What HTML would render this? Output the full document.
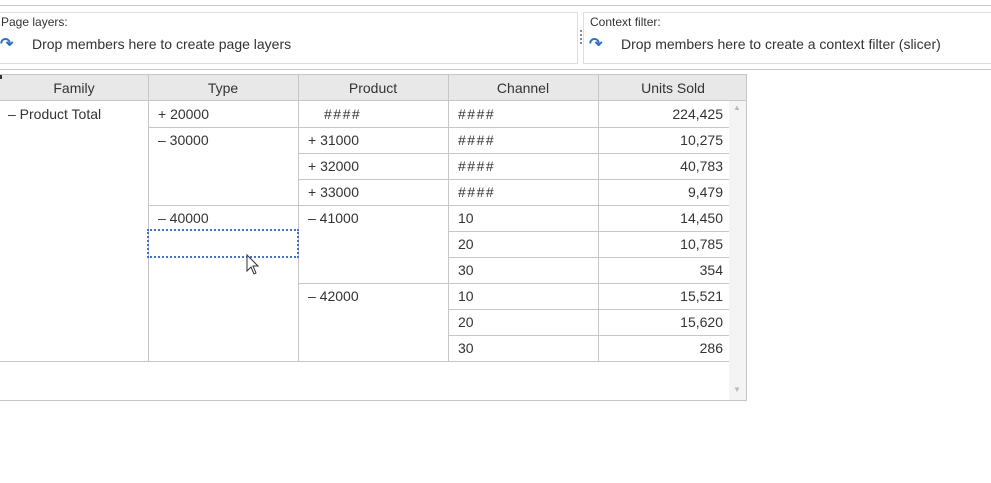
<!DOCTYPE html><html><head><style>
body{margin:0;width:991px;height:483px;background:#fff;font-family:"Liberation Sans",sans-serif;color:#333;position:relative;overflow:hidden}
div{position:absolute;box-sizing:border-box}
.h{height:1px;background:#c6c6c6}
.v{width:1px;background:#c6c6c6}
.t{font-size:14px;line-height:27px;white-space:nowrap}
.r{text-align:right}
.x{letter-spacing:1.5px}
.hd{font-size:14px;line-height:26px;text-align:center;top:75px}
.arr{color:#2f6fc4;font-size:16px;font-weight:bold}
</style></head><body>
<div class="h" style="left:0;top:5px;width:991px"></div>
<div style="left:-2px;top:12px;width:580px;height:52px;border:1px solid #ddd"></div>
<div style="left:583px;top:12px;width:410px;height:52px;border:1px solid #ddd"></div>
<div class="h" style="left:0;top:69px;width:991px"></div>
<div style="left:1px;top:15px;font-size:12px">Page layers:</div>
<div style="left:590px;top:15px;font-size:12px">Context filter:</div>
<div class="arr" style="left:0;top:34px">↷</div>
<div class="arr" style="left:589px;top:34px">↷</div>
<div style="left:580px;top:30px;width:2px;height:14px;border-left:2px dotted #888"></div>
<div style="left:32px;top:36px;font-size:14px">Drop members here to create page layers</div>
<div style="left:621px;top:36px;font-size:14px">Drop members here to create a context filter (slicer)</div>

<div style="left:0;top:74px;width:746px;height:27px;background:#e8e8e8;border-top:1px solid #c6c6c6;border-bottom:1px solid #c6c6c6"></div>
<div style="left:0;top:75px;width:4px;height:4px;border-left:2px dotted #333"></div>
<div class="hd" style="left:0;width:148px">Family</div>
<div class="hd" style="left:148px;width:150px">Type</div>
<div class="hd" style="left:298px;width:150px">Product</div>
<div class="hd" style="left:448px;width:150px">Channel</div>
<div class="hd" style="left:598px;width:150px">Units Sold</div>

<div style="left:729px;top:101px;width:17px;height:299px;background:#f4f4f4"></div>
<div style="left:733px;top:103px;font-size:8px;color:#bbb">▲</div>
<div style="left:733px;top:385px;font-size:8px;color:#bbb">▼</div>
<div class="v" style="left:746px;top:74px;height:327px"></div>
<div class="h" style="left:0;top:400px;width:747px"></div>
<div class="h" style="left:0;top:361px;width:729px"></div>

<div class="v" style="left:148px;top:74px;height:288px"></div>
<div class="v" style="left:298px;top:74px;height:288px"></div>
<div class="v" style="left:448px;top:74px;height:288px"></div>
<div class="v" style="left:598px;top:74px;height:288px"></div>

<div class="h" style="left:148px;top:127px;width:150px"></div>
<div class="h" style="left:148px;top:205px;width:150px"></div>
<div class="h" style="left:298px;top:127px;width:150px"></div>
<div class="h" style="left:298px;top:153px;width:150px"></div>
<div class="h" style="left:298px;top:179px;width:150px"></div>
<div class="h" style="left:298px;top:205px;width:150px"></div>
<div class="h" style="left:298px;top:283px;width:150px"></div>
<div class="h" style="left:448px;top:127px;width:281px"></div>
<div class="h" style="left:448px;top:153px;width:281px"></div>
<div class="h" style="left:448px;top:179px;width:281px"></div>
<div class="h" style="left:448px;top:205px;width:281px"></div>
<div class="h" style="left:448px;top:231px;width:281px"></div>
<div class="h" style="left:448px;top:257px;width:281px"></div>
<div class="h" style="left:448px;top:283px;width:281px"></div>
<div class="h" style="left:448px;top:309px;width:281px"></div>
<div class="h" style="left:448px;top:335px;width:281px"></div>

<div class="t" style="left:8px;top:101px">– Product Total</div>
<div class="t" style="left:158px;top:101px">+ 20000</div>
<div class="t" style="left:158px;top:127px">– 30000</div>
<div class="t" style="left:158px;top:205px">– 40000</div>
<div class="t x" style="left:324px;top:101px">####</div>
<div class="t" style="left:308px;top:127px">+ 31000</div>
<div class="t" style="left:308px;top:153px">+ 32000</div>
<div class="t" style="left:308px;top:179px">+ 33000</div>
<div class="t" style="left:308px;top:205px">– 41000</div>
<div class="t" style="left:308px;top:283px">– 42000</div>
<div class="t x" style="left:458px;top:101px">####</div>
<div class="t x" style="left:458px;top:127px">####</div>
<div class="t x" style="left:458px;top:153px">####</div>
<div class="t x" style="left:458px;top:179px">####</div>
<div class="t" style="left:458px;top:205px">10</div>
<div class="t" style="left:458px;top:231px">20</div>
<div class="t" style="left:458px;top:257px">30</div>
<div class="t" style="left:458px;top:283px">10</div>
<div class="t" style="left:458px;top:309px">20</div>
<div class="t" style="left:458px;top:335px">30</div>
<div class="t r" style="left:598px;width:125px;top:101px">224,425</div>
<div class="t r" style="left:598px;width:125px;top:127px">10,275</div>
<div class="t r" style="left:598px;width:125px;top:153px">40,783</div>
<div class="t r" style="left:598px;width:125px;top:179px">9,479</div>
<div class="t r" style="left:598px;width:125px;top:205px">14,450</div>
<div class="t r" style="left:598px;width:125px;top:231px">10,785</div>
<div class="t r" style="left:598px;width:125px;top:257px">354</div>
<div class="t r" style="left:598px;width:125px;top:283px">15,521</div>
<div class="t r" style="left:598px;width:125px;top:309px">15,620</div>
<div class="t r" style="left:598px;width:125px;top:335px">286</div>

<div style="left:147px;top:229px;width:152px;height:29px;border:2px dotted #4a72c4"></div>
<svg style="position:absolute;left:246px;top:254px" width="14" height="22" viewBox="0 0 14 22"><path d="M1 1 L1 17 L5 13 L8 20 L10 19 L7 12 L12 12 Z" fill="#fff" stroke="#333" stroke-width="1"/></svg>
</body></html>
